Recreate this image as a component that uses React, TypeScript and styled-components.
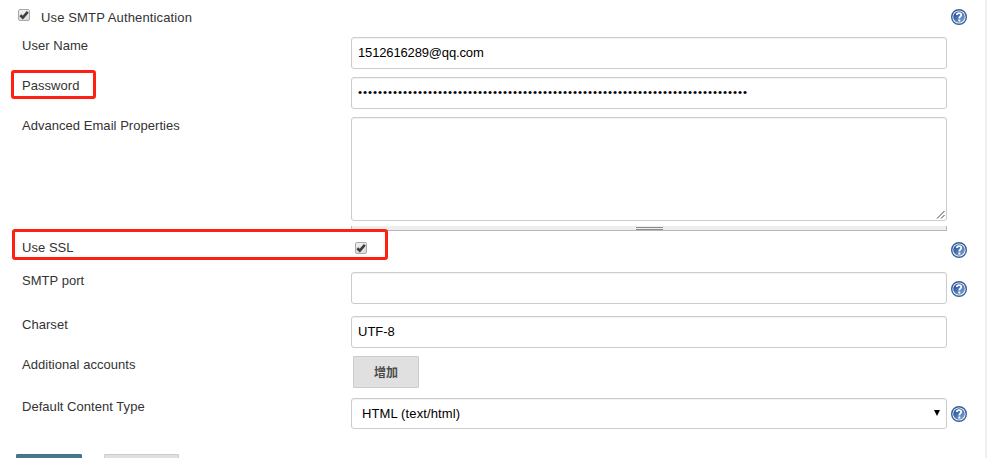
import React from "react";
import styled, { createGlobalStyle, css } from "styled-components";

export default function App() {
  return (
    <Page>
      <GlobalStyle />

      <AuthRow>
        <CheckBox />
        <AuthText>Use SMTP Authentication</AuthText>
        <HelpSlot $top={9}><HelpIcon id="auth"/></HelpSlot>
      </AuthRow>

      <Row $height={40}>
        <Label>User Name</Label>
        <Input $spacing={-0.15} defaultValue="1512616289@qq.com"/>
      </Row>

      <Row $height={40}>
        <Label>
          Password
          <PasswordMark/>
        </Label>
        <PasswordInput type="password" defaultValue={"x".repeat(78)}/>
      </Row>

      <Row $height={122}>
        <Label>Advanced Email Properties</Label>
        <AreaColumn>
          <Area>
            <ResizeCorner/>
          </Area>
          <ResizeHandle><Grip/></ResizeHandle>
        </AreaColumn>
      </Row>

      <Row $height={33}>
        <Label>
          Use SSL
          <SslMark/>
        </Label>
        <SslCell><CheckBox /></SslCell>
        <HelpSlot $top={3}><HelpIcon id="ssl"/></HelpSlot>
      </Row>

      <Row $height={44}>
        <Label>SMTP port</Label>
        <Input/>
        <HelpSlot $top={9}><HelpIcon id="port"/></HelpSlot>
      </Row>

      <Row $height={40}>
        <Label>Charset</Label>
        <Input defaultValue="UTF-8"/>
      </Row>

      <Row $height={42}>
        <Label>Additional accounts</Label>
        <AddButton>增加</AddButton>
      </Row>

      <Row $height={56}>
        <Label>Default Content Type</Label>
        <Select>
          HTML (text/html)
          <Arrow/>
        </Select>
        <HelpSlot $top={8}><HelpIcon id="type"/></HelpSlot>
      </Row>

      <Footer>
        <FooterButton $primary $width={66}/>
        <FooterButton $width={75}/>
      </Footer>
    </Page>
  )
}

function CheckBox() {
  return (
    <Box role="checkbox" aria-checked="true">
      <svg width="10" height="10" viewBox="0 0 10 10">
        <path d="M1.3 5.2 L3.8 7.6 L8.8 1.9" fill="none" stroke="#3c3c3c" strokeWidth="2.6"/>
      </svg>
    </Box>
  )
}

function HelpIcon({ id }: { id: string }) {
  return (
    <svg width="16" height="16" viewBox="0 0 16 16">
      <defs>
        <linearGradient id={id} x1="0" y1="0" x2="1" y2="1">
          <stop offset="0.1" stopColor="#24509a"/>
          <stop offset="1" stopColor="#84abd8"/>
        </linearGradient>
      </defs>
      <circle cx="8" cy="8" r="7.3" fill="#fff" stroke="#345d9b" strokeWidth="1.4"/>
      <circle cx="8" cy="8" r="5.8" fill={`url(#${id})`}/>
      <path d="M5.8 6.1 C5.8 3.4 10.3 3.4 10.3 5.8 C10.3 7.4 8.3 7.5 8.3 9.5" fill="none" stroke="#fff" strokeWidth="1.8"/>
      <rect x="7.3" y="10.5" width="2" height="2" fill="#fff"/>
    </svg>
  )
}

const GlobalStyle = createGlobalStyle`
  * {
    box-sizing: border-box;
  }
  body {
    margin: 0;
    background: #fff;
    color: #333;
    font-family: "Liberation Sans", "Noto Sans CJK SC", sans-serif;
    font-size: 13px;
    line-height: 16px;
  }
  svg {
    display: block;
  }
`;

const Page = styled.div`
  height: 458px;
  overflow: hidden;
  border-right: 2px solid #f0f0f0;
`;

const AuthRow = styled.div`
  display: flex;
  height: 37px;
  padding: 9px 18px 0 18px;

  & > :last-child {
    margin-top: 0;
    margin-left: auto;
  }
`;

const AuthText = styled.span`
  margin-left: 11px;
  padding-top: 1px;
  letter-spacing: 0.14px;
`;

const Row = styled.div<{ $height: number }>`
  display: grid;
  grid-template-columns: 329px 596px 16px;
  align-items: start;
  height: ${p => p.$height}px;
  padding-left: 22px;
`;

const Label = styled.div`
  position: relative;
  padding-top: 1px;
  letter-spacing: 0.04px;
`;

const HelpSlot = styled.div<{ $top: number }>`
  width: 16px;
  margin: ${p => p.$top}px 0 0 4px;
`;

const field = css`
  width: 596px;
  height: 32px;
  border: 1px solid #ccc;
  border-radius: 3px;
  background: #fff;
  box-shadow: inset 0 1px 1px rgba(0, 0, 0, 0.06);
  color: #000;
`;

const Input = styled.input<{ $spacing?: number }>`
  ${field}
  padding: 0 6px 1px;
  font: inherit;
  letter-spacing: ${p => p.$spacing ?? 0}px;
  outline: none;
`;

const PasswordInput = styled(Input)`
  padding-bottom: 3px;
  font-size: 11.5px;
  letter-spacing: 0.975px;
`;

const AreaColumn = styled.div`
  display: flex;
  flex-direction: column;
  gap: 5px;
`;

const Area = styled.div`
  ${field}
  display: flex;
  align-items: flex-end;
  justify-content: flex-end;
  height: 104px;
`;

const ResizeCorner = () => (
  <svg width="10" height="10" viewBox="0 0 10 10">
    <path d="M1 8.5 L8.5 1 M5 8.5 L8.5 5" stroke="#444" strokeWidth="1"/>
  </svg>
);

const ResizeHandle = styled.div`
  display: flex;
  justify-content: center;
  height: 5px;
  padding-top: 1px;
  border: solid #b8b8b8;
  border-width: 0 1px 1px;
  background: #eee;
`;

const Grip = styled.div`
  width: 27px;
  height: 3px;
  border: solid #888c84;
  border-width: 1px 0;
`;

const Box = styled.div`
  display: flex;
  width: 12px;
  height: 12px;
  align-items: center;
  justify-content: center;
  border: 1px solid #aaa;
  border-radius: 2px;
  background: linear-gradient(#eee, #dcdcdc);
`;

const SslCell = styled.div`
  padding: 3px 0 0 4px;
`;

/* red frames drawn over the form */
const Mark = styled.div`
  position: absolute;
  border: 3px solid #ff2011;
  border-radius: 3px;
`;

const PasswordMark = styled(Mark)`
  left: -11px;
  top: -7px;
  width: 85px;
  height: 29px;
`;

const SslMark = styled(Mark)`
  left: -10px;
  top: -10px;
  width: 376px;
  height: 31px;
`;

const AddButton = styled.button`
  width: 66px;
  height: 32px;
  margin-left: 2px;
  padding: 0 0 2px;
  border: 1px solid #ccc;
  border-radius: 1px;
  background: #e0e0e0;
  color: #4c4c4c;
  font: 700 12px "Noto Sans CJK SC", sans-serif;
`;

const Select = styled.div`
  ${field}
  display: flex;
  align-items: center;
  justify-content: space-between;
  height: 31px;
  padding: 0 6px 0 10px;
  letter-spacing: 0.12px;
`;

const Arrow = styled.i`
  margin-top: -2px;
  border: solid transparent;
  border-width: 6px 3.5px 0;
  border-top-color: #000;
`;

const Footer = styled.div`
  display: flex;
  gap: 22px;
  padding-left: 16px;
`;

const FooterButton = styled.button<{ $primary?: boolean; $width: number }>`
  width: ${p => p.$width}px;
  height: 32px;
  padding: 0;
  border: 1px solid ${p => p.$primary ? '#43708a' : '#ccc'};
  border-radius: 1px;
  background: ${p => p.$primary ? '#4b758b' : '#e0e0e0'};
`;
